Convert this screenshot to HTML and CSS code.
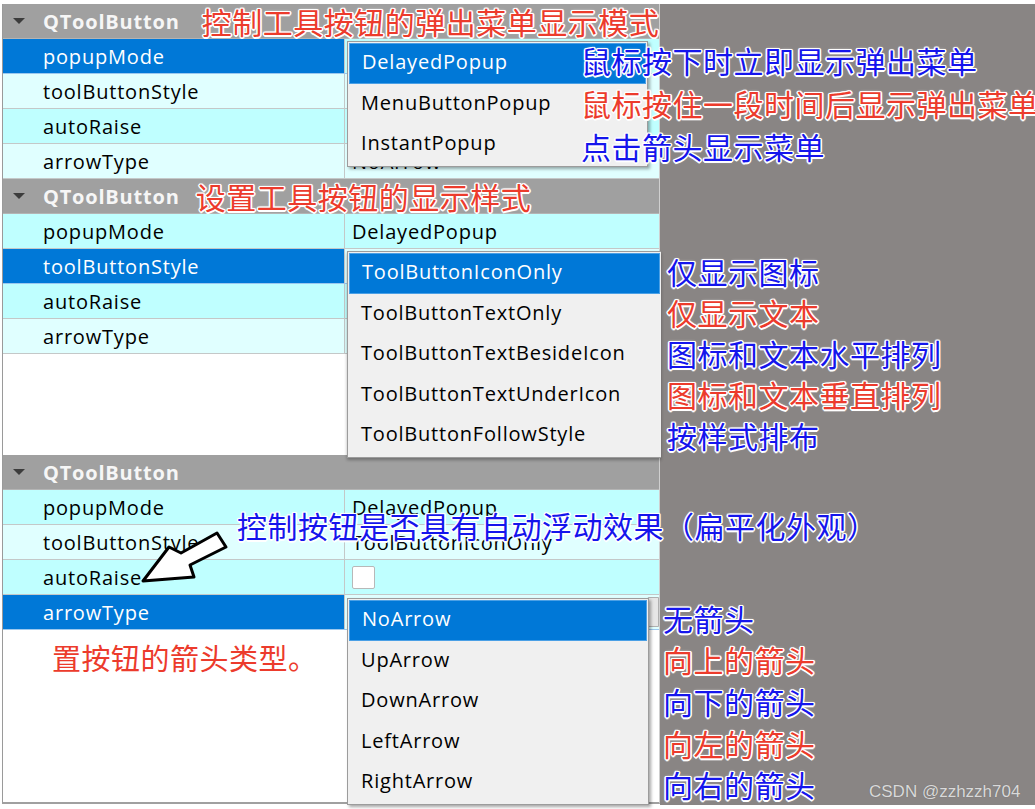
FILE: index.html
```html
<!DOCTYPE html>
<html lang="zh-CN">
<head>
<meta charset="utf-8">
<title>QToolButton properties</title>
<link rel="stylesheet" href="styles.css">
</head>
<body>
<div class="stage">
  <div class="panel">
    <section class="group">
      <header class="ghead"><i class="tri"></i><b class="gname">QToolButton</b><span class="note red hnote">控制工具按钮的弹出菜单显示模式</span></header>
      <div class="prop sel a"><div class="pn">popupMode</div><div class="pv"></div></div>
      <div class="prop b"><div class="pn">toolButtonStyle</div><div class="pv">ToolButtonIconOnly</div></div>
      <div class="prop a"><div class="pn">autoRaise</div><div class="pv"><span class="check"></span></div></div>
      <div class="prop b"><div class="pn">arrowType</div><div class="pv">NoArrow</div></div>
    </section>
    <section class="group">
      <header class="ghead"><i class="tri"></i><b class="gname">QToolButton</b><span class="note red hnote tight">设置工具按钮的显示样式</span></header>
      <div class="prop a"><div class="pn">popupMode</div><div class="pv">DelayedPopup</div></div>
      <div class="prop sel b"><div class="pn">toolButtonStyle</div><div class="pv"></div></div>
      <div class="prop a"><div class="pn">autoRaise</div><div class="pv"><span class="check"></span></div></div>
      <div class="prop b"><div class="pn">arrowType</div><div class="pv">NoArrow</div></div>
      <div class="spacer"></div>
    </section>
    <section class="group last">
      <header class="ghead"><i class="tri"></i><b class="gname">QToolButton</b></header>
      <div class="prop a"><div class="pn">popupMode</div><div class="pv">DelayedPopup</div></div>
      <div class="prop b"><div class="pn">toolButtonStyle</div><div class="pv">ToolButtonIconOnly</div></div>
      <div class="prop a"><div class="pn">autoRaise</div><div class="pv"><span class="check"></span></div></div>
      <div class="prop sel b"><div class="pn">arrowType</div><div class="pv"><span class="combo"></span></div></div>
      <p class="note red tail-note">置按钮的箭头类型。</p>
    </section>
  </div>
  <div class="backdrop"></div>

  <ul class="dropdown dd1">
    <li class="hi">DelayedPopup</li>
    <li>MenuButtonPopup</li>
    <li>InstantPopup</li>
  </ul>
  <ul class="dropdown dd2">
    <li class="hi">ToolButtonIconOnly</li>
    <li>ToolButtonTextOnly</li>
    <li>ToolButtonTextBesideIcon</li>
    <li>ToolButtonTextUnderIcon</li>
    <li>ToolButtonFollowStyle</li>
  </ul>
  <ul class="dropdown dd3">
    <li class="hi">NoArrow</li>
    <li>UpArrow</li>
    <li>DownArrow</li>
    <li>LeftArrow</li>
    <li>RightArrow</li>
  </ul>

  <div class="notes n1">
    <span class="note blue">鼠标按下时立即显示弹出菜单</span>
    <span class="note red">鼠标按住一段时间后显示弹出菜单</span>
    <span class="note blue">点击箭头显示菜单</span>
  </div>
  <div class="notes n2">
    <span class="note blue">仅显示图标</span>
    <span class="note red">仅显示文本</span>
    <span class="note blue">图标和文本水平排列</span>
    <span class="note red">图标和文本垂直排列</span>
    <span class="note blue">按样式排布</span>
  </div>
  <div class="notes n3">
    <span class="note blue">无箭头</span>
    <span class="note red">向上的箭头</span>
    <span class="note blue">向下的箭头</span>
    <span class="note red">向左的箭头</span>
    <span class="note blue">向右的箭头</span>
  </div>
  <span class="note blue callout">控制按钮是否具有自动浮动效果（扁平化外观）</span>

  <svg class="pointer" width="100" height="70" viewBox="130 525 100 70" aria-hidden="true">
    <polygon points="143,581 169,547 181,553 217,533 226,547 190,565 194,577" fill="#fff" stroke="#000" stroke-width="3" stroke-linejoin="round"/>
  </svg>

  <span class="watermark">CSDN @zzhzzh704</span>
</div>
</body>
</html>
```

FILE: styles.css
```css
* { box-sizing: border-box; }
html, body { margin: 0; padding: 0; background: #fff; }

.stage {
  position: relative;
  width: 1035px;
  height: 809px;
  display: flex;
  align-items: flex-start;
  padding: 4px 0 0 2px;
  overflow: hidden;
  font-family: "Open Sans", "Noto Sans", sans-serif;
  font-size: 20px;
  letter-spacing: 0.8px;
  color: #000;
}

.panel {
  width: 658px;
  height: 800px;
  display: flex;
  flex-direction: column;
  background: #fff;
  border-left: 1px solid #9a9a9a;
  border-bottom: 2px solid #a0a0a0;
  border-right: 1px solid #cfcfcf;
}

.backdrop {
  flex: 1;
  height: 801px;
  background: #898584;
}

.group { display: flex; flex-direction: column; }
.group.last { flex: 1; }

.ghead {
  height: 35px;
  display: flex;
  align-items: center;
  padding-left: 10px;
  background: #a0a0a0;
  border-bottom: 1px solid #b4b4b4;
  white-space: nowrap;
}
.tri {
  width: 0; height: 0;
  border-left: 6px solid transparent;
  border-right: 6px solid transparent;
  border-top: 6px solid #3c3c3c;
  margin-right: 18px;
}
.gname {
  color: #f6f6f6;
  font-weight: 700;
  font-size: 20px;
  letter-spacing: 0.8px;
}
.hnote { margin-left: 22px; }
.hnote.tight { margin-left: 16px; }

.prop {
  height: 35px;
  display: grid;
  grid-template-columns: 342px 1fr;
  border-bottom: 1px solid #c4c8c8;
  white-space: nowrap;
}
.prop.a { background: #bfffff; }
.prop.b { background: #e0ffff; }
.pn {
  display: flex;
  align-items: center;
  padding-left: 40px;
  border-right: 1px solid #c4c8c8;
}
.pv {
  display: flex;
  align-items: center;
  padding-left: 7px;
  overflow: hidden;
}
.prop.sel .pn { background: #0078d7; color: #fff; }
.prop.sel { border-bottom-color: #9cc8ee; }

.check {
  width: 23px; height: 23px;
  background: #fff;
  border: 1px solid #b8b8b8;
  border-radius: 2px;
}
.combo {
  align-self: stretch;
  margin: 2px 0 2px auto;
  width: 12px;
  background: #e6e6e6;
  border: 1px solid #b0b0b0;
  border-radius: 2px 0 0 2px;
}

.spacer { height: 101px; }

.dropdown {
  position: absolute;
  margin: 0;
  padding: 1px;
  list-style: none;
  background: #f0f0f0;
  border: 1px solid #9c9c9c;
  box-shadow: 2px 2px 3px rgba(0,0,0,0.35);
  z-index: 2;
}
.dropdown li {
  height: 40.5px;
  display: flex;
  align-items: center;
  padding-left: 12px;
  padding-bottom: 3px;
  white-space: nowrap;
}
.dropdown li.hi {
  background: #0078d7;
  color: #fff;
  border: 1px solid #4aa0e6;
}
.dd1 { left: 347px; top: 41px; width: 301px; }
.dd2 { left: 347px; top: 251px; width: 314px; border-right: 0; box-shadow: 0 2px 3px rgba(0,0,0,0.3); }
.dd3 { left: 347px; top: 598px; width: 302px; }

.note {
  font-family: "Noto Sans CJK SC", "Noto Sans CJK JP", sans-serif;
  font-size: 30px;
  letter-spacing: 0.5px;
  line-height: 1;
  white-space: nowrap;
  text-shadow:
    1.5px 0 #fff, -1.5px 0 #fff, 0 1.5px #fff, 0 -1.5px #fff,
    1px 1px #fff, -1px -1px #fff, 1px -1px #fff, -1px 1px #fff,
    0 0 3px #fff;
}
.red { color: #ec3b2c; }
.blue { color: #1515ec; }

.notes {
  position: absolute;
  display: flex;
  flex-direction: column;
  z-index: 3;
}
.notes .note { display: flex; align-items: center; }
.n1 { left: 581px; top: 38px; }
.n1 .note { height: 43px; }
.n2 { left: 667px; top: 250px; }
.n2 .note { height: 41px; }
.n3 { left: 663px; top: 597px; }
.n3 .note { height: 41.6px; }

.callout {
  position: absolute;
  left: 237px;
  top: 510px;
  z-index: 3;
}

.tail-note {
  margin: 0;
  padding: 13px 0 0 49px;
  font-size: 29px;
}

.pointer {
  position: absolute;
  left: 130px;
  top: 525px;
  z-index: 4;
}

.watermark {
  position: absolute;
  left: 869px;
  top: 782px;
  font-family: "Liberation Sans", Arial, sans-serif;
  font-size: 17px;
  letter-spacing: 0;
  color: #d9d9d9;
  text-shadow: 0 0 1px rgba(0,0,0,0.25);
  z-index: 3;
}
```
